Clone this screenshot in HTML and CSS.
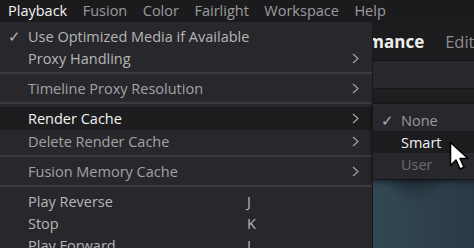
FILE: index.html
```html
<!DOCTYPE html>
<html lang="en">
<head>
  <meta charset="UTF-8">
  <title>Playback menu</title>
  <link rel="stylesheet" href="styles.css">
</head>
<body>
  <div class="menubar">
    <span class="menubar-item active">Playback</span>
    <span class="menubar-item">Fusion</span>
    <span class="menubar-item">Color</span>
    <span class="menubar-item">Fairlight</span>
    <span class="menubar-item">Workspace</span>
    <span class="menubar-item">Help</span>
  </div>
  <div class="app">
    <div class="app-header">
      <span class="page-title">Performance</span>
      <span class="page-divider"></span>
      <span class="page-tab">Edit</span>
    </div>
    <div class="app-panel"></div>
    <div class="app-strip"></div>
    <div class="app-viewer"></div>

    <div class="menu">
      <div class="menu-item"><span class="check">✓</span><span class="label">Use Optimized Media if Available</span></div>
      <div class="menu-item"><span class="check"></span><span class="label">Proxy Handling</span><svg class="arrow" viewBox="0 0 7 11"><path d="M1 1l5 4.5L1 10" /></svg></div>
      <div class="menu-sep"></div>
      <div class="menu-item dim"><span class="check"></span><span class="label">Timeline Proxy Resolution</span><svg class="arrow" viewBox="0 0 7 11"><path d="M1 1l5 4.5L1 10" /></svg></div>
      <div class="menu-sep"></div>
      <div class="menu-item hover"><span class="check"></span><span class="label">Render Cache</span><svg class="arrow" viewBox="0 0 7 11"><path d="M1 1l5 4.5L1 10" /></svg></div>
      <div class="menu-item dim"><span class="check"></span><span class="label">Delete Render Cache</span><svg class="arrow" viewBox="0 0 7 11"><path d="M1 1l5 4.5L1 10" /></svg></div>
      <div class="menu-sep"></div>
      <div class="menu-item dim"><span class="check"></span><span class="label">Fusion Memory Cache</span><svg class="arrow" viewBox="0 0 7 11"><path d="M1 1l5 4.5L1 10" /></svg></div>
      <div class="menu-sep"></div>
      <div class="menu-item"><span class="check"></span><span class="label">Play Reverse</span><span class="shortcut">J</span></div>
      <div class="menu-item"><span class="check"></span><span class="label">Stop</span><span class="shortcut">K</span></div>
      <div class="menu-item"><span class="check"></span><span class="label">Play Forward</span><span class="shortcut">L</span></div>
    </div>

    <div class="submenu">
      <div class="sub-item"><span class="check">✓</span><span>None</span></div>
      <div class="sub-item hover"><span class="check"></span><span>Smart</span></div>
      <div class="sub-item off"><span class="check"></span><span>User</span></div>
    </div>

    <svg class="cursor" viewBox="0 0 20 30">
      <path d="M1.5 1.5v23l5.5-5.5 4 9 4-1.8-4-8.7h8z" fill="#fff" stroke="#000" stroke-width="1.5" stroke-linejoin="round" />
    </svg>
  </div>
</body>
</html>
```

FILE: styles.css
```css
body {
  margin: 0;
  width: 474px;
  height: 248px;
  overflow: hidden;
  background: #1c1c1f;
  font-family: 'Open Sans', 'Noto Sans', sans-serif;
  font-size: 14.5px;
}
.menubar {
  display: flex;
  align-items: center;
  height: 22px;
  padding-left: 8px;
  background: #1b1b1e;
  gap: 15.5px;
}
.menubar-item {
  color: #9c9c9f;
  font-size: 14.5px;
  line-height: 22px;
}
.menubar-item.active {
  color: #f4f4f4;
}
.app {
  position: relative;
  height: 226px;
  display: flex;
  flex-direction: column;
}
.app-header {
  height: 38px;
  display: flex;
  align-items: center;
  padding-left: 314px;
  background: #1c1c1f;
  border-bottom: 1px solid #151517;
  white-space: nowrap;
}
.page-title {
  color: #ededed;
  font-weight: 700;
  font-size: 17px;
}
.page-divider {
  width: 1px;
  height: 18px;
  background: #4a4a4e;
  margin: 0 10px 0 11px;
}
.page-tab {
  color: #8c8c8f;
  font-size: 16.5px;
}
.app-panel {
  height: 27px;
  background: #29292d;
  border-bottom: 1px solid #161618;
}
.app-strip {
  height: 15px;
  background: #1f1f22;
}
.app-viewer {
  flex: 1;
  background:
    radial-gradient(ellipse 40px 60px at 415px 40px, rgba(10, 14, 18, 0.8), transparent),
    radial-gradient(ellipse 40px 50px at 460px 30px, rgba(80, 105, 120, 0.6), transparent),
    linear-gradient(90deg, #2c3d49, #23313b 40%, #344a58 75%, #2a3a45);
}
.menu {
  position: absolute;
  left: 0;
  top: 0;
  width: 373px;
  height: 240px;
  padding-top: 3px;
  background: #28282c;
  border-right: 1px solid #18181a;
  box-sizing: border-box;
}
.menu-item {
  display: flex;
  align-items: center;
  height: 22px;
  color: #b6b6b8;
}
.menu-item.dim {
  color: #a2a2a4;
}
.menu-item.hover {
  background: #1d1d20;
  color: #f2f2f2;
  height: 23px;
}
.check {
  width: 28px;
  text-align: center;
  font-size: 15px;
}
.label {
  flex: 1;
}
.arrow {
  width: 7px;
  height: 11px;
  margin-right: 13px;
  fill: none;
  stroke: #a4a4a6;
  stroke-width: 1.2;
}
.shortcut {
  width: 125px;
}
.menu-sep {
  height: 2px;
  margin: 3px 0;
  background: #3b3b3f;
}
.submenu {
  position: absolute;
  left: 372px;
  top: 81px;
  width: 110px;
  padding: 5px 0 4px;
  background: #28282c;
  border: 1px solid #161618;
  box-shadow: 0 2px 6px rgba(0, 0, 0, 0.5);
}
.sub-item {
  display: flex;
  align-items: center;
  height: 22px;
  color: #9a9a9d;
}
.sub-item .check {
  width: 28px;
  color: #b0b0b2;
}
.sub-item.hover {
  background: #1d1d20;
  color: #f2f2f2;
}
.sub-item.off {
  color: #6c6c70;
}
.cursor {
  position: absolute;
  left: 449px;
  top: 119px;
  width: 20px;
  height: 30px;
}
```
